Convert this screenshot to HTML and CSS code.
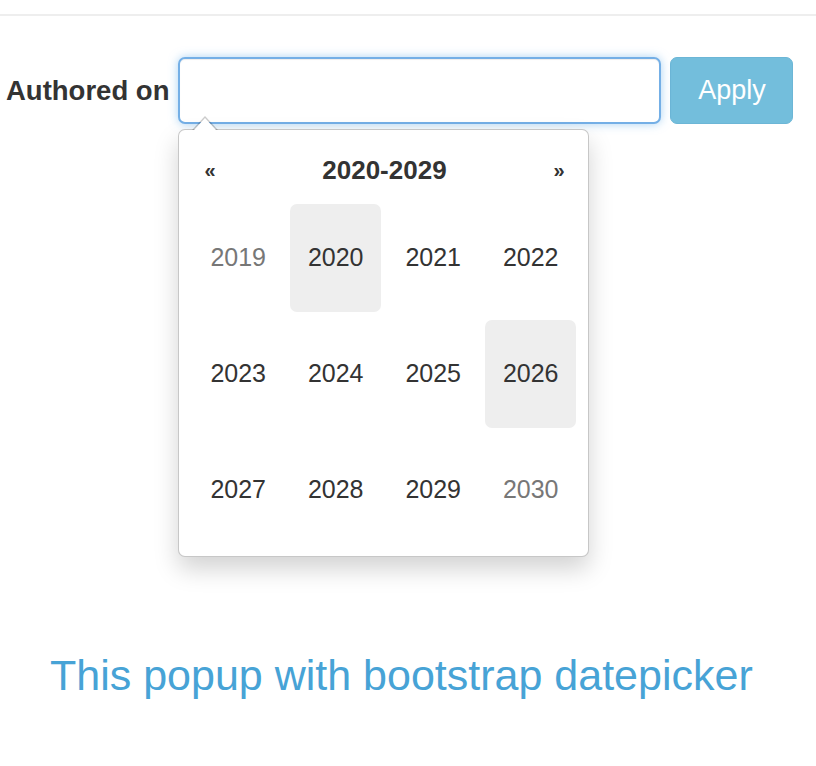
FILE: index.html
```html
<!DOCTYPE html>
<html>
<head>
  <meta charset="UTF-8">
  <title>Authored on - datepicker</title>
  <link rel="stylesheet" href="styles.css">
</head>
<body>
  <div class="topbar"></div>

  <form class="filter">
    <label class="filter-label" for="authored">Authored on</label>
    <div class="date-field">
      <input id="authored" class="date-input" type="text" value="">
      <div class="datepicker">
        <div class="dp-head">
          <span class="dp-nav">&laquo;</span>
          <span class="dp-switch">2020-2029</span>
          <span class="dp-nav">&raquo;</span>
        </div>
        <div class="dp-years">
          <span class="year old">2019</span>
          <span class="year active">2020</span>
          <span class="year">2021</span>
          <span class="year">2022</span>
          <span class="year">2023</span>
          <span class="year">2024</span>
          <span class="year">2025</span>
          <span class="year focused">2026</span>
          <span class="year">2027</span>
          <span class="year">2028</span>
          <span class="year">2029</span>
          <span class="year new">2030</span>
        </div>
      </div>
    </div>
    <button class="btn-apply" type="button">Apply</button>
  </form>

  <h3 class="caption">This popup with bootstrap datepicker</h3>
</body>
</html>
```

FILE: styles.css
```css
body {
  margin: 0;
  color: #333333;
  font-family: "Liberation Sans", Arial, sans-serif;
}

.topbar {
  height: 2px;
  margin-top: 14px;
  background: #eeeeee;
}

.filter {
  display: flex;
  align-items: center;
  gap: 9px;
  margin-top: 41px;
  padding-left: 6px;
}

.filter-label {
  font-size: 27.5px;
  font-weight: bold;
}

.date-field {
  position: relative;
  width: 483px;
}

.date-input {
  display: block;
  box-sizing: border-box;
  width: 100%;
  height: 67px;
  border: 2px solid #74afe6;
  border-radius: 7px;
  box-shadow: inset 0 1px 1px rgba(0, 0, 0, 0.075), 0 0 10px rgba(102, 175, 233, 0.55);
  outline: none;
}

.btn-apply {
  width: 123px;
  height: 67px;
  border: 1px solid #6cb6d6;
  border-radius: 7px;
  background: #73bedc;
  color: #ffffff;
  font-family: "Liberation Sans", Arial, sans-serif;
  font-size: 27px;
}

/* popup */
.datepicker {
  position: absolute;
  top: 72px;
  left: 0;
  box-sizing: border-box;
  width: 411px;
  padding: 10px 9px 8px 10px;
  background: #ffffff;
  border: 1px solid rgba(0, 0, 0, 0.22);
  border-radius: 7px;
  box-shadow: 0 12px 24px rgba(0, 0, 0, 0.175);
}

.datepicker:before {
  content: "";
  position: absolute;
  top: -14px;
  left: 13px;
  border-left: 13px solid transparent;
  border-right: 13px solid transparent;
  border-bottom: 14px solid rgba(0, 0, 0, 0.2);
}

.datepicker:after {
  content: "";
  position: absolute;
  top: -12px;
  left: 15px;
  border-left: 11px solid transparent;
  border-right: 11px solid transparent;
  border-bottom: 12px solid #ffffff;
}

.dp-head {
  display: grid;
  grid-template-columns: 41px 1fr 41px;
  align-items: center;
  height: 60px;
  text-align: center;
  font-weight: bold;
}

.dp-nav {
  font-size: 20px;
}

.dp-switch {
  font-size: 26px;
}

.dp-years {
  display: grid;
  grid-template-columns: repeat(4, 1fr);
  grid-auto-rows: 116px;
}

.year {
  display: flex;
  align-items: center;
  justify-content: center;
  margin: 4px 3.5px;
  padding-bottom: 2px;
  border-radius: 7px;
  font-size: 25px;
}

.year.old,
.year.new {
  color: #777777;
}

.year.active,
.year.focused {
  background: #eeeeee;
}

.caption {
  margin: 527px 0 0 0;
  padding-left: 50px;
  color: #47a3d6;
  font-size: 43px;
  font-weight: normal;
  line-height: 48px;
}
```
